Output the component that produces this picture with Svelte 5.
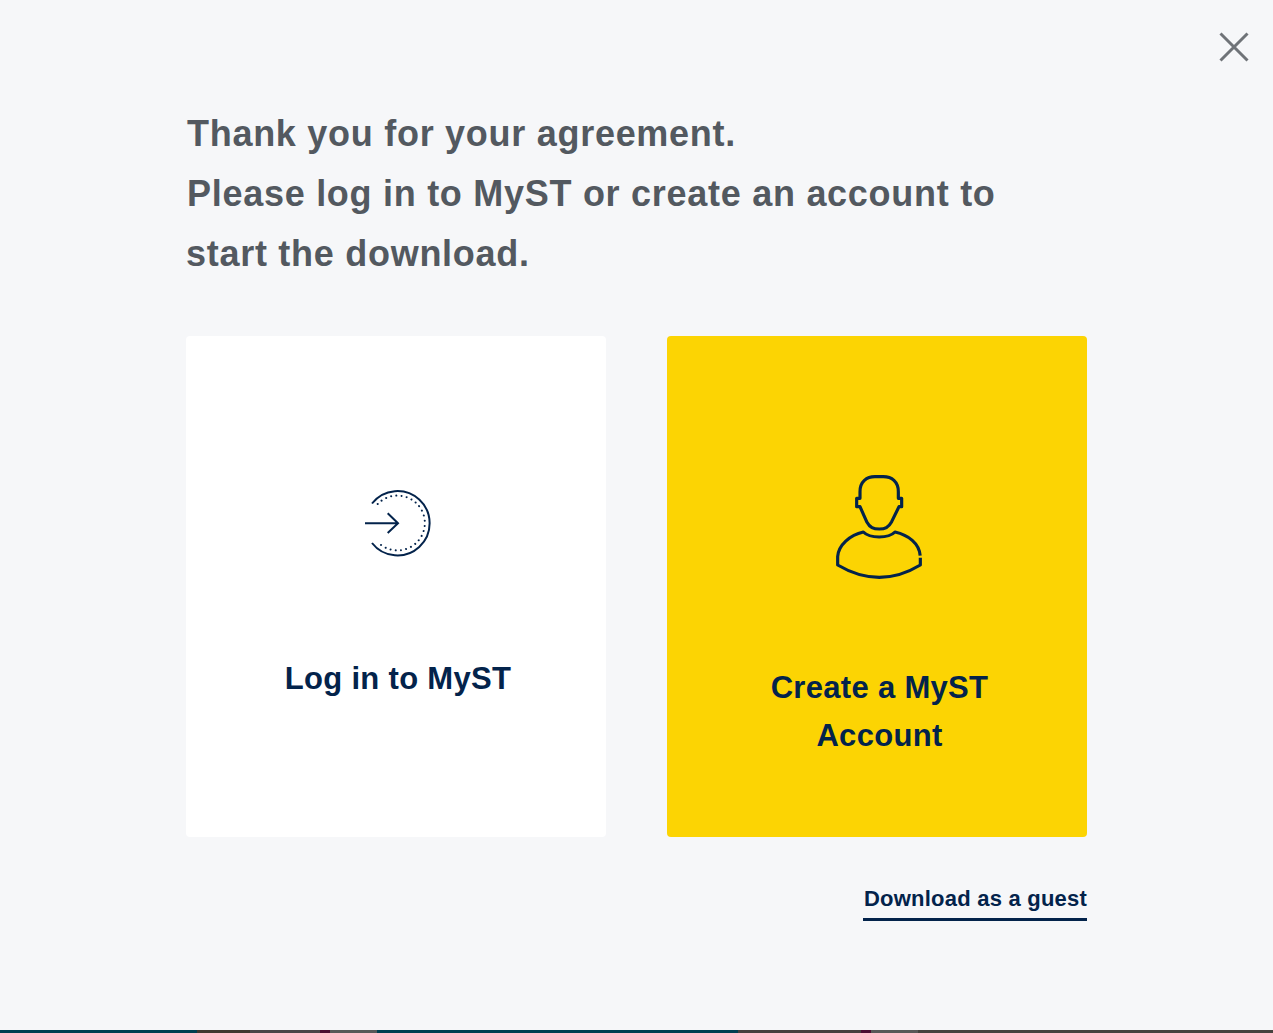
<script>
	const stripSegments = [
		{ width: 197, color: '#003f50' },
		{ width: 53, color: '#40372f' },
		{ width: 70, color: '#4a4547' },
		{ width: 10, color: '#4c0c30' },
		{ width: 47, color: '#585858' },
		{ width: 361, color: '#003f50' },
		{ width: 123, color: '#463f3c' },
		{ width: 10, color: '#4c0c30' },
		{ width: 47, color: '#585858' },
		{ width: 355, color: '#45423e' }
	];
</script>

<div class="overlay">
	<button class="close" aria-label="Close">
		<svg width="30" height="30" viewBox="0 0 30 30" fill="none" stroke="#6f7378" stroke-width="3">
			<path d="M1.500 1.500 28.500 28.500M28.500 1.500 1.500 28.500" />
		</svg>
	</button>

	<main class="content">
		<h1>
			<span class="l1">Thank you for your agreement.</span>
			<span class="l2">Please log in to MyST or create an account to</span>
			<span>start the download.</span>
		</h1>

		<div class="cards">
			<a class="card login" href="#login">
				<svg class="login-icon" width="68" height="70" viewBox="0 0 68 70" fill="none" stroke="#03234b" stroke-width="2">
					<path d="M8 15.500A32.200 32.200 0 1 1 8 55" />
					<path d="M13.700 16A27.400 27.400 0 1 1 13.700 54" stroke-dasharray="0.01 5.200" stroke-linecap="round" />
					<path d="M1 35.300H34M23.700 25.300 34 35.300 23.700 45" />
				</svg>
				<span class="label">Log in to MyST</span>
			</a>
			<a class="card create" href="#create">
				<svg class="user-icon" width="120" height="130" viewBox="0 0 360 390" fill="none" stroke="#03234b" stroke-width="9.500" stroke-linejoin="round">
					<path d="M120 115V95C120 65 140 50 165 50H190C215 50 235 65 235 95V115H245V140H237L215 185C205 203 195 207 178 207 160 207 150 203 140 185L120 140H110V115Z" />
					<path d="M301 293V315C260 340 220 352 178 352 135 352 95 340 53 315V290C55 255 90 225 130 216 150 236 205 236 225 216 265 225 298 250 300.500 287" />
				</svg>
				<span class="label">Create a MyST<br />Account</span>
			</a>
		</div>

		<div class="guest-row">
			<a class="guest" href="#guest">Download as a guest</a>
		</div>
	</main>
</div>

<div class="strip">
	{#each stripSegments as seg}
		<span style="width:{seg.width}px;background:{seg.color}"></span>
	{/each}
</div>

<style>
	:global(body) {
		background: #f6f7f9;
		font-family: 'Liberation Sans', Arial, sans-serif;
		overflow: hidden;
	}

	.overlay {
		height: 1030px;
		position: relative;
		background: #f6f7f9;
	}

	.close {
		position: absolute;
		top: 32px;
		right: 24px;
		padding: 0;
		border: none;
		background: none;
		display: block;
		height: 30px;
	}

	.content {
		width: 901px;
		margin-left: 186px;
		padding-top: 104px;
	}

	h1 {
		margin: 0;
		font-size: 36px;
		line-height: 60px;
		font-weight: 700;
		letter-spacing: 0.02em;
		color: #535960;
	}

	h1 span {
		display: block;
		white-space: nowrap;
	}

	.l1,
	.l2 {
		padding-left: 1px;
	}

	.cards {
		display: flex;
		gap: 61px;
		margin-top: 52px;
	}

	.card {
		width: 420px;
		height: 501px;
		border-radius: 4px;
		box-sizing: border-box;
		display: flex;
		flex-direction: column;
		align-items: center;
		text-decoration: none;
		color: #03234b;
		font-size: 31px;
		font-weight: 700;
		line-height: 48px;
		letter-spacing: 0.01em;
		text-align: center;
	}

	.login {
		background: #fff;
		padding-top: 152px;
	}

	.login-icon {
		margin-left: 4px;
	}

	.login .label {
		margin-top: 97px;
		margin-left: 4px;
	}

	.create {
		background: #fcd403;
		padding-top: 124px;
	}

	.user-icon {
		margin-left: 6px;
	}

	.create .label {
		margin-top: 74px;
		margin-left: 5px;
	}

	.guest-row {
		display: flex;
		justify-content: flex-end;
		margin-top: 47px;
	}

	.guest {
		display: block;
		color: #03234b;
		text-decoration: none;
		font-size: 22px;
		font-weight: 700;
		line-height: 30px;
		letter-spacing: 0.01em;
		padding-left: 1px;
		padding-bottom: 4px;
		border-bottom: 3px solid #03234b;
	}

	.strip {
		display: flex;
		height: 3px;
	}

	.strip span {
		display: block;
		flex: none;
	}
</style>
